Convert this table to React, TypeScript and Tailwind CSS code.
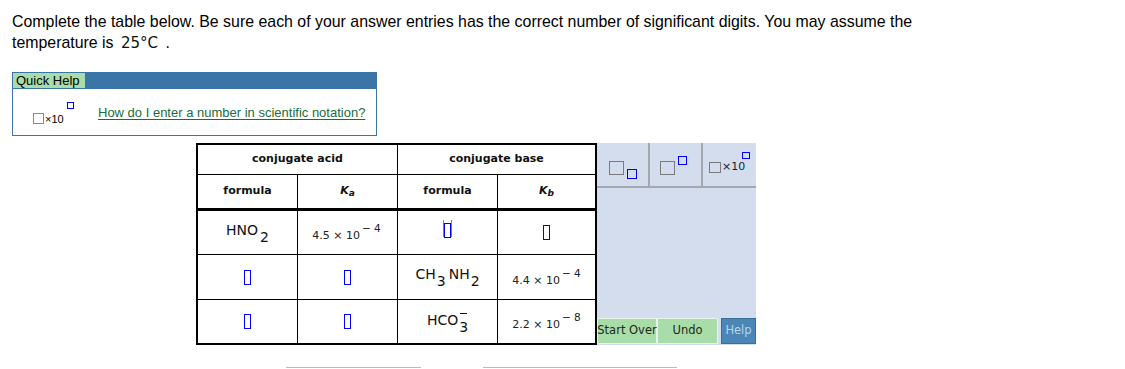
import React from "react";

const BlueBox = ({ className = "" }: { className?: string }) => (
  <span className={"inline-block w-[7px] h-[15px] border border-[#0000ff] " + className} />
);

const Sci = ({ m, e }: { m: string; e: string }) => (
  <span className="font-['DejaVu_Sans'] text-[11px] text-[#222] inline-flex items-start">
    <span className="mt-[8px]">{m} × 10</span>
    <span className="text-[10.5px] ml-[2px] mt-[1px]">− {e}</span>
  </span>
);

export default function App() {
  return (
    <div className="font-['Liberation_Sans',Arial,sans-serif] text-black bg-white w-[1125px] h-[369px] overflow-hidden pl-3 pt-[11px]">
      <p className="text-[15.9px] leading-[21px] whitespace-nowrap">
        Complete the table below. Be sure each of your answer entries has the correct number of significant digits. You may assume the
        <br />
        temperature is{" "}
        <span className="font-['DejaVu_Sans',sans-serif] text-[15px] text-[#111] mx-[3px]">25°C</span> .
      </p>

      {/* Quick help */}
      <div className="mt-[18px] w-[365px] h-[64px] border border-[#3b74a6] flex flex-col">
        <div className="h-[16px] bg-[#3b74a6] flex items-start">
          <span className="bg-[#a8dca8] text-[13px] leading-[15px] px-[3px] h-[15px] w-[72px] text-black whitespace-nowrap">Quick Help</span>
        </div>
        <div className="flex-1 flex items-center pl-[20px] pt-[2px]">
          <span className="relative inline-flex items-end w-[60px] h-[24px]">
            <span className="inline-block w-[11px] h-[11px] border border-[#888] mb-[1px]" />
            <span className="text-[11px] leading-[11px] ml-[1px]">×10</span>
            <span className="absolute left-[34px] top-[1px] w-[7px] h-[7px] border border-[#0000ff]" />
          </span>
          <a className="ml-[5px] text-[13px] text-[#1b6c3a] underline underline-offset-2 whitespace-nowrap">
            How do I enter a number in scientific notation?
          </a>
        </div>
      </div>

      {/* Table + panel */}
      <div className="flex items-start ml-[184px] mt-[7px]">
        <div className="w-[401px] border-2 border-black font-['DejaVu_Sans',sans-serif] text-[#111]">
          <div className="flex h-[30px] border-b border-black text-[11px] font-bold">
            <div className="w-[200px] border-r border-black flex items-center justify-center pb-[1px]">conjugate acid</div>
            <div className="flex-1 flex items-center justify-center pb-[1px]">conjugate base</div>
          </div>
          <div className="flex h-[36px] border-b-[3px] border-black text-[11px] font-bold">
            <div className="w-[100px] border-r border-black flex items-center justify-center">formula</div>
            <div className="w-[100px] border-r border-black flex items-center justify-center">
              <span className="italic">K</span>
              <span className="text-[9px] italic mt-[5px]">a</span>
            </div>
            <div className="w-[100px] border-r border-black flex items-center justify-center">formula</div>
            <div className="flex-1 flex items-center justify-center">
              <span className="italic">K</span>
              <span className="text-[9px] italic mt-[5px]">b</span>
            </div>
          </div>
          {/* Row 1 */}
          <div className="flex h-[44px] border-b border-black">
            <div className="w-[100px] border-r border-black flex items-center justify-center">
              <span className="text-[14px] inline-flex items-start mt-[2px]">
                HNO<span className="text-[14px] mt-[7px] ml-[2px]">2</span>
              </span>
            </div>
            <div className="w-[100px] border-r border-black flex items-center justify-center pr-[2px]">
              <Sci m="4.5" e="4" />
            </div>
            <div className="w-[100px] border-r border-black flex items-center justify-center">
              <span className="relative inline-block">
                <BlueBox />
                <span className="absolute -left-[1px] -top-[1px] w-[9px] h-[17px] border-x border-black/50" />
              </span>
            </div>
            <div className="flex-1 flex items-center justify-center">
              <BlueBox />
            </div>
          </div>
          {/* Row 2 */}
          <div className="flex h-[45px] border-b border-black">
            <div className="w-[100px] border-r border-black flex items-center justify-center">
              <BlueBox />
            </div>
            <div className="w-[100px] border-r border-black flex items-center justify-center">
              <BlueBox />
            </div>
            <div className="w-[100px] border-r border-black flex items-center justify-center">
              <span className="text-[14px] inline-flex items-start mt-[2px]">
                CH<span className="mt-[7px] ml-[1px] mr-[3px]">3</span>NH<span className="mt-[7px] ml-[1px]">2</span>
              </span>
            </div>
            <div className="flex-1 flex items-center justify-center">
              <Sci m="4.4" e="4" />
            </div>
          </div>
          {/* Row 3 */}
          <div className="flex h-[43px]">
            <div className="w-[100px] border-r border-black flex items-center justify-center">
              <BlueBox />
            </div>
            <div className="w-[100px] border-r border-black flex items-center justify-center">
              <BlueBox />
            </div>
            <div className="w-[100px] border-r border-black flex items-center justify-center">
              <span className="text-[14px] inline-flex items-start mt-[4px]">
                HCO
                <span className="relative inline-block ml-[1px] pt-[7px]">
                  <span className="absolute left-[1px] top-[3px] w-[7px] h-px bg-[#111]" />
                  3
                </span>
              </span>
            </div>
            <div className="flex-1 flex items-center justify-center">
              <Sci m="2.2" e="8" />
            </div>
          </div>
        </div>

        {/* Side panel */}
        <div className="w-[159px] h-[202px] bg-[#d3ddee] flex flex-col font-['DejaVu_Sans',sans-serif]">
          <div className="flex h-[45px] border-b-2 border-[#a3a8b0]">
            <div className="w-[53px] border-r-2 border-[#a3a8b0] relative">
              <span className="absolute left-[12px] top-[18px] w-[15px] h-[14px] border border-[#7a7a7a]" />
              <span className="absolute left-[30px] top-[26px] w-[10px] h-[10px] border border-[#0000ff]" />
            </div>
            <div className="w-[53px] border-r-2 border-[#a3a8b0] relative">
              <span className="absolute left-[10px] top-[18px] w-[15px] h-[14px] border border-[#7a7a7a]" />
              <span className="absolute left-[28px] top-[13px] w-[9px] h-[9px] border border-[#0000ff]" />
            </div>
            <div className="flex-1 relative">
              <span className="absolute left-[6px] top-[19px] w-[12px] h-[11px] border border-[#7a7a7a]" />
              <span className="absolute left-[19px] top-[16px] text-[11px] text-[#222]">×10</span>
              <span className="absolute left-[39px] top-[9px] w-[8px] h-[7px] border border-[#0000ff]" />
            </div>
          </div>
          <div className="flex-1" />
          <div className="flex h-[26px] mb-[1px] text-[11.5px]">
            <div className="w-[60px] bg-[#a8dca8] border border-[#e6f3e6] flex items-center justify-center text-[#1a2a1a] whitespace-nowrap">
              Start Over
            </div>
            <div className="w-[61px] bg-[#a8dca8] border border-[#e6f3e6] flex items-center justify-center text-[#1a2a1a]">
              Undo
            </div>
            <div className="w-[3px]" />
            <div className="w-[35px] bg-[#4a87b6] border border-[#3a6f99] flex items-center justify-center text-[#b7d3ea]">
              Help
            </div>
          </div>
        </div>
      </div>

      <div className="flex mt-[22px]">
        <div className="ml-[274px] w-[135px] h-px bg-[#bbbbbb]" />
        <div className="ml-[62px] w-[194px] h-px bg-[#bbbbbb]" />
      </div>
    </div>
  );
}
